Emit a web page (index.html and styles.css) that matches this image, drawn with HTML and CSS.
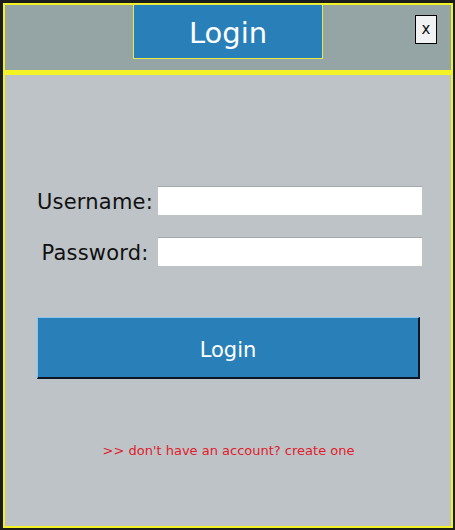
FILE: index.html
```html
<!DOCTYPE html>
<html>
<head>
<meta charset="utf-8">
<link rel="stylesheet" href="styles.css">
</head>
<body>
<div class="window">
  <div class="header">
    <div class="title">Login</div>
    <button class="close">x</button>
  </div>
  <div class="content">
    <form class="form">
      <div class="row">
        <label class="label">Username:</label>
        <input class="field" type="text">
      </div>
      <div class="row">
        <label class="label">Password:</label>
        <input class="field" type="password">
      </div>
      <button class="submit" type="button">Login</button>
    </form>
    <div class="link">&gt;&gt; don't have an account? create one</div>
  </div>
</div>
</body>
</html>
```

FILE: styles.css
```css
html, body {
  margin: 0;
  padding: 0;
  background: #1c1c1a;
  width: 455px;
  height: 530px;
  overflow: hidden;
}
body {
  padding: 3px 0 0 3px;
  box-sizing: border-box;
  font-family: "DejaVu Sans", Verdana, sans-serif;
}
.window {
  width: 450px;
  height: 525px;
  box-sizing: border-box;
  border: 2px solid #f2f226;
  display: flex;
  flex-direction: column;
  background: #bdc3c7;
}
.header {
  height: 65px;
  background: #95a5a6;
  border-bottom: 5px solid #f2f226;
  position: relative;
  flex: none;
}
.title {
  position: absolute;
  left: 128px;
  top: -1px;
  width: 188px;
  height: 50px;
  box-sizing: content-box;
  background: #2980b9;
  border: 1px solid #e8e84a;
  color: #ffffff;
  font-size: 29px;
  display: flex;
  align-items: center;
  justify-content: center;
  padding-top: 3px;
  line-height: 1;
}
.close {
  position: absolute;
  left: 410px;
  top: 10px;
  width: 22px;
  height: 29px;
  box-sizing: border-box;
  background: #f0f2f3;
  border: 1px solid #000;
  padding: 0;
  font-family: "DejaVu Sans", Verdana, sans-serif;
  font-size: 15px;
  line-height: 1;
  color: #111;
}
.content {
  flex: 1;
  display: flex;
  flex-direction: column;
  align-items: flex-start;
  padding: 111px 0 0 32px;
}
.form {
  display: flex;
  flex-direction: column;
  gap: 22px;
  margin: 0;
}
.row {
  display: flex;
  align-items: center;
  gap: 5px;
}
.label {
  width: 116px;
  text-align: center;
  font-size: 21px;
  letter-spacing: 0.2px;
  color: #111;
  padding-top: 2px;
}
.field {
  width: 264px;
  height: 29px;
  box-sizing: border-box;
  border: none;
  border-top: 1px solid #a4a8aa;
  background: #fff;
  padding: 0;
  margin: 0;
}
.submit {
  margin-top: 29px;
  width: 383px;
  height: 62px;
  box-sizing: border-box;
  background: #2980b9;
  border-style: solid;
  border-width: 1px 2px 2px 1px;
  border-color: #8ac4ec #0b1626 #0b1626 #8ac4ec;
  color: #fff;
  font-family: "DejaVu Sans", Verdana, sans-serif;
  font-size: 21px;
  padding: 4px 0 0 0;
}
.link {
  align-self: stretch;
  margin-top: 64px;
  margin-left: -32px;
  text-align: center;
  color: #e0202a;
  font-size: 13px;
  padding-left: 1px;
}
```
